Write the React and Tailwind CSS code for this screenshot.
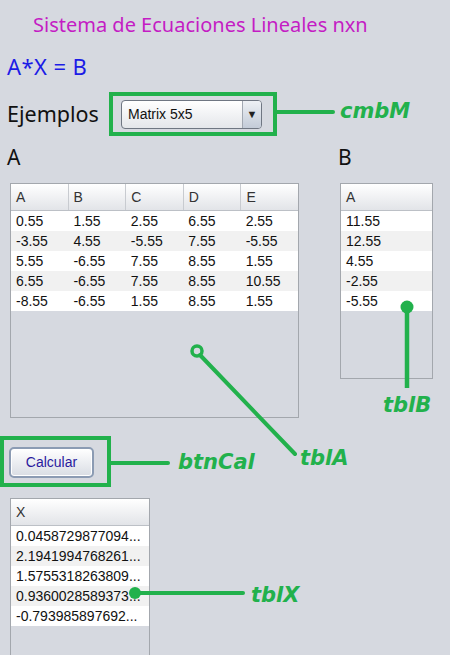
import React from 'react'

const A_ROWS = [
  ['0.55', '1.55', '2.55', '6.55', '2.55'],
  ['-3.55', '4.55', '-5.55', '7.55', '-5.55'],
  ['5.55', '-6.55', '7.55', '8.55', '1.55'],
  ['6.55', '-6.55', '7.55', '8.55', '10.55'],
  ['-8.55', '-6.55', '1.55', '8.55', '1.55'],
]
const B_ROWS = [['11.55'], ['12.55'], ['4.55'], ['-2.55'], ['-5.55']]
const X_ROWS = [
  ['0.0458729877094...'],
  ['2.1941994768261...'],
  ['1.5755318263809...'],
  ['0.9360028589373...'],
  ['-0.793985897692...'],
]

function Table({ cols, rows, className }) {
  return (
    <div className={`border border-[#a3a7ad] bg-[#d6d9e0] overflow-hidden ${className}`}>
      <div className="flex h-[27px] bg-gradient-to-b from-white to-[#e2e4e8] border-b border-[#bcc0c6]">
        {cols.map((c, i) => (
          <div key={i} className="flex-1 flex items-center pl-[5px] text-[14px] text-[#333] border-r border-[#c8cbd0] last:border-r-0">
            {c}
          </div>
        ))}
      </div>
      {rows.map((r, i) => (
        <div key={i} className={`flex h-[20px] items-center ${i % 2 ? 'bg-[#f1f1f1]' : 'bg-white'}`}>
          {r.map((v, j) => (
            <div key={j} className="flex-1 pl-[5px] text-[14px] text-[#111] whitespace-nowrap overflow-hidden">{v}</div>
          ))}
        </div>
      ))}
    </div>
  )
}

const note = 'absolute leading-none text-[21px] font-bold italic text-[#22b14c] [font-family:"DejaVu_Sans",sans-serif]'

export default function App() {
  return (
    <div className="relative w-[450px] h-[655px] overflow-hidden bg-[#d6d9e0] [font-family:'Liberation_Sans',Arial,sans-serif]">
      <div className="pl-[33px] pt-[11px] leading-[27px] text-[20px] text-[#c41cc4] [font-family:'Noto_Sans',sans-serif]">
        Sistema de Ecuaciones Lineales nxn
      </div>
      <div className="pl-[7px] mt-[14px] leading-[29px] text-[22px] tracking-[0.4px] text-[#1c1ce6] [font-family:'Noto_Sans',sans-serif]">
        A*X = B
      </div>

      <div className="mt-[11px] flex items-center h-[44px]">
        <div className="pl-[7px] w-[109px] text-[21.5px] leading-[28px] text-[#111] [font-family:'Noto_Sans',sans-serif]">Ejemplos</div>
        <div className="w-[168px] h-[44px] border-4 border-[#22b14c] flex items-center pl-[8px]">
          <div className="w-[141px] h-[29px] rounded-[4px] border border-[#6f7682] bg-gradient-to-b from-white to-[#e4e6ea] flex items-center overflow-hidden">
            <span className="flex-1 pl-[6px] text-[14px] text-[#111]">Matrix 5x5</span>
            <div className="w-[19px] h-full border-l border-[#a2a8b2] bg-gradient-to-b from-[#eef1f5] to-[#c3cbd8] flex items-center justify-center">
              <span className="text-[11px] text-[#222] leading-none">▼</span>
            </div>
          </div>
        </div>
      </div>

      <div className="flex">
        <div className="pl-[7px]">
          <div className="mt-[8px] leading-[27px] text-[21px] text-[#111] [font-family:'Noto_Sans',sans-serif]">A</div>
          <Table cols={['A', 'B', 'C', 'D', 'E']} rows={A_ROWS} className="ml-[3px] mt-[12px] w-[289px] h-[235px]" />
        </div>
        <div className="pl-[39px]">
          <div className="mt-[8px] leading-[27px] text-[21px] text-[#111] [font-family:'Noto_Sans',sans-serif]">B</div>
          <Table cols={['A']} rows={B_ROWS} className="ml-[2px] mt-[12px] w-[93px] h-[196px]" />
        </div>
      </div>

      <div className="mt-[18px] w-[111px] h-[51px] border-4 border-[#22b14c] pl-[5px] pt-[7px]">
        <button className="w-[85px] h-[31px] rounded-[5px] border-2 border-[#8b9bb3] bg-gradient-to-b from-white to-[#d9dde4] text-[14px] text-[#2a1a9e] shadow-[inset_0_0_0_1px_#ffffff]">
          Calcular
        </button>
      </div>

      <Table cols={['X']} rows={X_ROWS} className="ml-[10px] mt-[11px] w-[140px] h-[200px]" />

      <svg className="absolute inset-0 pointer-events-none" width="450" height="655">
        <g stroke="#22b14c" strokeWidth="4" fill="none" strokeLinecap="round">
          <line x1="277" y1="112" x2="333" y2="112" />
          <line x1="111" y1="463" x2="168" y2="463" />
          <line x1="200" y1="355" x2="295" y2="454" />
          <circle cx="197" cy="351" r="5" strokeWidth="3.5" />
          <line x1="407" y1="307" x2="407" y2="388" strokeWidth="4.5" strokeLinecap="butt" />
          <line x1="135" y1="593" x2="243" y2="593" />
        </g>
        <circle cx="407" cy="307" r="6.5" fill="#22b14c" />
        <circle cx="135" cy="593" r="6" fill="#22b14c" />
      </svg>

      <span className={note} style={{ left: 340, top: 101 }}>cmbM</span>
      <span className={note} style={{ left: 178, top: 452 }}>btnCal</span>
      <span className={note} style={{ left: 300, top: 448 }}>tblA</span>
      <span className={note} style={{ left: 383, top: 395 }}>tblB</span>
      <span className={note} style={{ left: 251, top: 585 }}>tblX</span>
    </div>
  )
}
